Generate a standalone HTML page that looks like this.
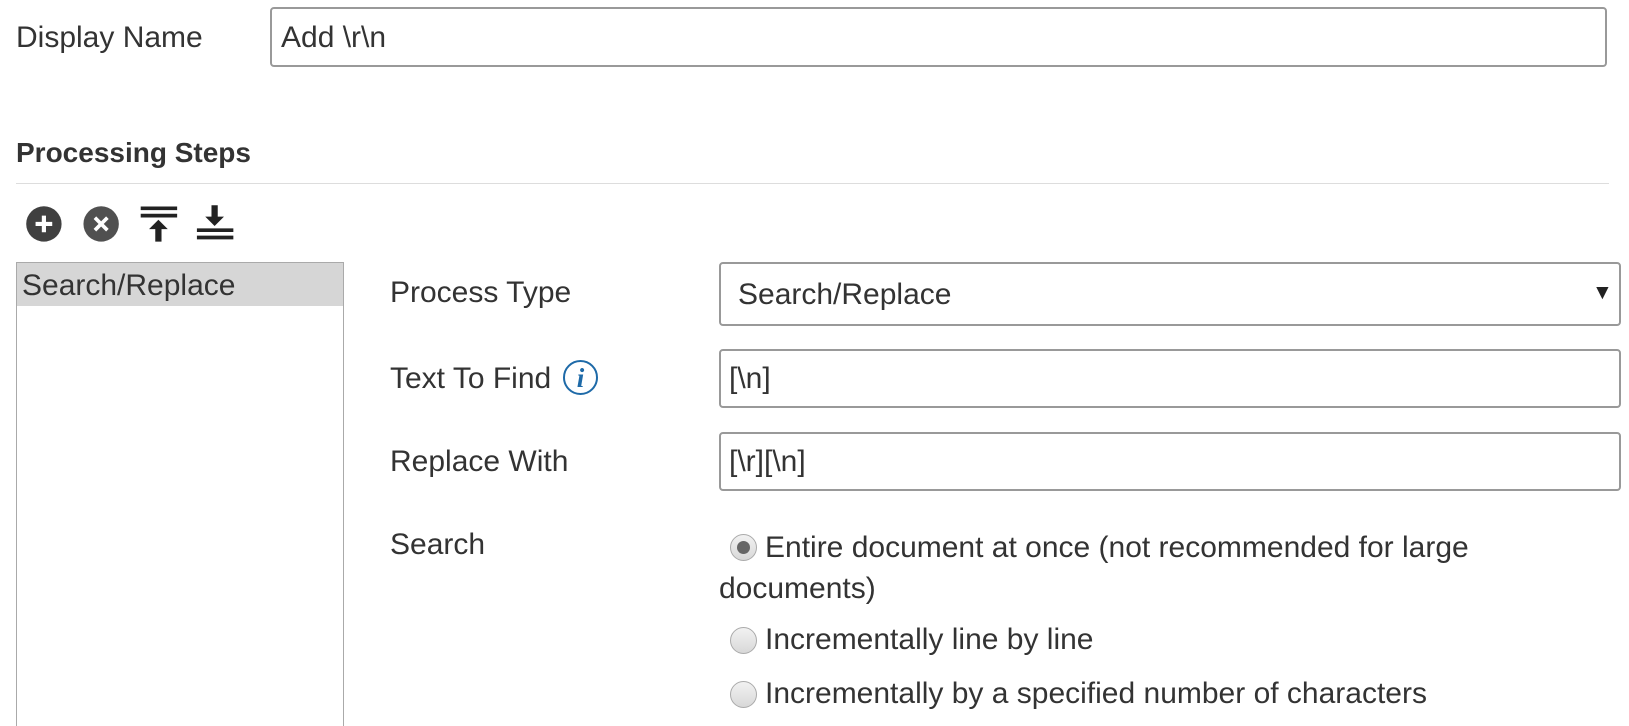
<!DOCTYPE html>
<html><head><meta charset="utf-8"><style>
html,body{margin:0;width:1629px;height:726px;overflow:hidden}
body{background:#fff;font-family:"Liberation Sans",sans-serif;color:#333;font-size:30px;position:relative}
.a{position:absolute;white-space:nowrap;line-height:36px}
.box{position:absolute;border:2px solid #999;border-radius:4px;box-sizing:border-box;background:#fff}
.r{position:absolute;width:27px;height:27px;border-radius:50%;border:1px solid #aaa;background:linear-gradient(#f2f2f2,#d8d8d8);box-sizing:border-box}
</style></head><body>
<div class="a" style="left:16px;top:20px">Display Name</div>
<div class="box" style="left:270px;top:7px;width:1337px;height:60px"></div>
<div class="a" style="left:281px;top:20px">Add \r\n</div>
<div class="a" style="left:16px;top:135px;font-weight:bold;font-size:28px">Processing Steps</div>
<div class="a" style="left:16px;top:183px;width:1593px;height:1px;background:#ddd"></div>
<svg class="a" style="left:21px;top:204px" width="229" height="42" viewBox="0 0 220 40">
<circle cx="22" cy="19" r="17" fill="#404040"/><path d="M22 11v16M14 19h16" stroke="#fff" stroke-width="4"/>
<circle cx="77" cy="19" r="17" fill="#505050"/><path d="M71 13l12 12M83 13l-12 12" stroke="#fff" stroke-width="3.5"/>
<path d="M115 4h35M115 11h35" stroke="#222" stroke-width="3.5"/><path d="M132 15l-9 9h6v12h6v-12h6z" fill="#222"/>
<path d="M169 25h35M169 32h35" stroke="#222" stroke-width="3.5"/><path d="M183 1h6v11h6l-9 9-9-9h6z" fill="#222"/>
</svg>
<div class="a" style="left:16px;top:262px;width:328px;height:464px;border:1px solid #aaa;border-bottom:none;box-sizing:border-box"></div>
<div class="a" style="left:17px;top:263px;width:326px;height:43px;background:#d6d6d6"></div>
<div class="a" style="left:22px;top:268px">Search/Replace</div>
<div class="a" style="left:390px;top:275px">Process Type</div>
<div class="box" style="left:719px;top:262px;width:902px;height:64px"></div>
<div class="a" style="left:738px;top:277px">Search/Replace</div>
<div class="a" style="left:1592px;top:275px;font-size:21px;color:#222">▼</div>
<div class="a" style="left:390px;top:361px">Text To Find</div>
<svg class="a" style="left:562px;top:359px" width="37" height="37"><circle cx="18.5" cy="18.5" r="16.5" fill="none" stroke="#1e6aa8" stroke-width="2"/><text x="18.5" y="28" text-anchor="middle" font-family="Liberation Serif" font-style="italic" font-weight="bold" font-size="27" fill="#1e6aa8">i</text></svg>
<div class="box" style="left:719px;top:349px;width:902px;height:59px"></div>
<div class="a" style="left:729px;top:361px">[\n]</div>
<div class="a" style="left:390px;top:444px">Replace With</div>
<div class="box" style="left:719px;top:432px;width:902px;height:59px"></div>
<div class="a" style="left:729px;top:444px">[\r][\n]</div>
<div class="a" style="left:390px;top:527px">Search</div>
<div class="r" style="left:730px;top:534px"></div><div class="a" style="left:737px;top:541px;width:13px;height:13px;border-radius:50%;background:#666"></div>
<div class="a" style="left:765px;top:530px">Entire document at once (not recommended for large</div>
<div class="a" style="left:719px;top:571px">documents)</div>
<div class="r" style="left:730px;top:627px"></div>
<div class="a" style="left:765px;top:622px">Incrementally line by line</div>
<div class="r" style="left:730px;top:681px"></div>
<div class="a" style="left:765px;top:676px">Incrementally by a specified number of characters</div>
</body></html>
